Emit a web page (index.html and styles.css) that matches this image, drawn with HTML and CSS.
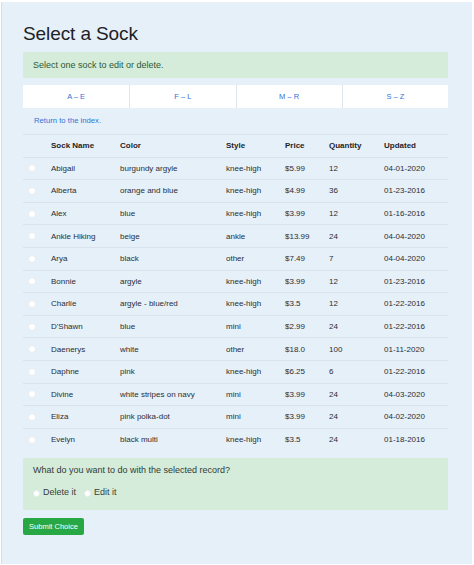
FILE: index.html
```html
<!DOCTYPE html>
<html lang="en">
<head>
<meta charset="utf-8">
<title>Select a Sock</title>
<link rel="stylesheet" href="styles.css">
</head>
<body>
<div class="page">
  <h1 class="title">Select a Sock</h1>
  <div class="alert">Select one sock to edit or delete.</div>
  <nav class="tabs">
    <a class="tab" href="#">A – E</a>
    <a class="tab" href="#">F – L</a>
    <a class="tab" href="#">M – R</a>
    <a class="tab" href="#">S – Z</a>
  </nav>
  <div class="back"><a href="#">Return to the index.</a></div>
  <form>
  <table class="socks">
    <colgroup>
      <col class="c-radio"><col class="c-name"><col class="c-color"><col class="c-style"><col class="c-price"><col class="c-qty"><col class="c-upd">
    </colgroup>
    <thead>
      <tr><th></th><th>Sock Name</th><th>Color</th><th>Style</th><th>Price</th><th>Quantity</th><th>Updated</th></tr>
    </thead>
    <tbody>
      <tr><td><input class="radio" type="radio" name="id"></td><td>Abigail</td><td>burgundy argyle</td><td>knee-high</td><td>$5.99</td><td>12</td><td>04-01-2020</td></tr>
      <tr><td><input class="radio" type="radio" name="id"></td><td>Alberta</td><td>orange and blue</td><td>knee-high</td><td>$4.99</td><td>36</td><td>01-23-2016</td></tr>
      <tr><td><input class="radio" type="radio" name="id"></td><td>Alex</td><td>blue</td><td>knee-high</td><td>$3.99</td><td>12</td><td>01-16-2016</td></tr>
      <tr><td><input class="radio" type="radio" name="id"></td><td>Ankle Hiking</td><td>beige</td><td>ankle</td><td>$13.99</td><td>24</td><td>04-04-2020</td></tr>
      <tr><td><input class="radio" type="radio" name="id"></td><td>Arya</td><td>black</td><td>other</td><td>$7.49</td><td>7</td><td>04-04-2020</td></tr>
      <tr><td><input class="radio" type="radio" name="id"></td><td>Bonnie</td><td>argyle</td><td>knee-high</td><td>$3.99</td><td>12</td><td>01-23-2016</td></tr>
      <tr><td><input class="radio" type="radio" name="id"></td><td>Charlie</td><td>argyle - blue/red</td><td>knee-high</td><td>$3.5</td><td>12</td><td>01-22-2016</td></tr>
      <tr><td><input class="radio" type="radio" name="id"></td><td>D'Shawn</td><td>blue</td><td>mini</td><td>$2.99</td><td>24</td><td>01-22-2016</td></tr>
      <tr><td><input class="radio" type="radio" name="id"></td><td>Daenerys</td><td>white</td><td>other</td><td>$18.0</td><td>100</td><td>01-11-2020</td></tr>
      <tr><td><input class="radio" type="radio" name="id"></td><td>Daphne</td><td>pink</td><td>knee-high</td><td>$6.25</td><td>6</td><td>01-22-2016</td></tr>
      <tr><td><input class="radio" type="radio" name="id"></td><td>Divine</td><td>white stripes on navy</td><td>mini</td><td>$3.99</td><td>24</td><td>04-03-2020</td></tr>
      <tr><td><input class="radio" type="radio" name="id"></td><td>Eliza</td><td>pink polka-dot</td><td>mini</td><td>$3.99</td><td>24</td><td>04-02-2020</td></tr>
      <tr><td><input class="radio" type="radio" name="id"></td><td>Evelyn</td><td>black multi</td><td>knee-high</td><td>$3.5</td><td>24</td><td>01-18-2016</td></tr>
    </tbody>
  </table>
  <div class="choice">
    <p class="question">What do you want to do with the selected record?</p>
    <div class="options">
      <label class="option"><input class="radio small" type="radio" name="act">Delete it</label>
      <label class="option"><input class="radio small" type="radio" name="act">Edit it</label>
    </div>
  </div>
  <button class="submit" type="button">Submit Choice</button>
  </form>
</div>
</body>
</html>
```

FILE: styles.css
```css
html, body {
  margin: 0;
  padding: 0;
  background: #ffffff;
}
body {
  padding: 2px 2px 1px 1px;
  font-family: "Liberation Sans", Arial, sans-serif;
  color: #212529;
}
.page {
  height: 562px;
  box-sizing: border-box;
  background: #e6f0f9;
  border-left: 1px solid #d5dde5;
  padding: 21px 24px 0 21px;
}
.title {
  margin: 0;
  font-size: 19px;
  line-height: 22px;
  font-weight: 400;
  color: #1d2125;
  letter-spacing: -0.1px;
}
.alert {
  margin-top: 7px;
  height: 26px;
  line-height: 26px;
  padding: 0 10px;
  background: #d4ecd9;
  border-radius: 2px;
  font-size: 9px;
  color: #2d5a37;
}
.tabs {
  margin-top: 7px;
  display: grid;
  grid-template-columns: repeat(4, 1fr);
  height: 23px;
  background: #ffffff;
}
.tab {
  display: flex;
  align-items: center;
  justify-content: center;
  font-size: 7.5px;
  color: #2f73d8;
  text-decoration: none;
  border-left: 1px solid #dfe5ea;
}
.tab:first-child {
  border-left: none;
}
.back {
  height: 26px;
  line-height: 26px;
  padding-left: 11px;
  font-size: 7.7px;
}
.back a {
  color: #2f73d8;
  text-decoration: none;
}
form {
  margin: 0;
}
.socks {
  width: 100%;
  table-layout: fixed;
  border-collapse: collapse;
  font-size: 8px;
  color: #2a2e33;
}
.c-radio { width: 22px; }
.c-name { width: 69px; }
.c-color { width: 106px; }
.c-style { width: 59px; }
.c-price { width: 44px; }
.c-qty { width: 55px; }
.c-upd { width: 70px; }
.socks th,
.socks td {
  height: 21.6px;
  padding: 0 0 0 6px;
  text-align: left;
  vertical-align: middle;
  border-top: 1px solid #d8e3ed;
  white-space: nowrap;
}
.socks th {
  font-weight: 700;
  color: #1f2327;
}
.socks td:first-child {
  padding-left: 5px;
}
.radio {
  -webkit-appearance: none;
  appearance: none;
  display: block;
  margin: 0;
  width: 8px;
  height: 8px;
  border-radius: 50%;
  background: #ffffff;
  border: 1px solid #e7ecf0;
  box-sizing: border-box;
}
.choice {
  margin-top: 7.6px;
  height: 52px;
  box-sizing: border-box;
  background: #d4ecd9;
  border-radius: 2px;
  padding: 6px 10px 0 10px;
}
.question {
  margin: 0;
  font-size: 9px;
  line-height: 13px;
  color: #333a36;
}
.options {
  margin-top: 9px;
  display: flex;
  align-items: center;
  gap: 8px;
  height: 13px;
}
.option {
  display: flex;
  align-items: center;
  font-size: 9px;
  color: #3a403c;
}
.radio.small {
  width: 7px;
  height: 7px;
  margin: 2px 3px 0 0;
}
.submit {
  display: block;
  margin-top: 8px;
  width: 61px;
  height: 17px;
  padding: 0;
  border: none;
  border-radius: 2px;
  background: #28a745;
  color: #ffffff;
  font-family: "Liberation Sans", Arial, sans-serif;
  font-size: 7.5px;
  font-weight: 400;
}
```
